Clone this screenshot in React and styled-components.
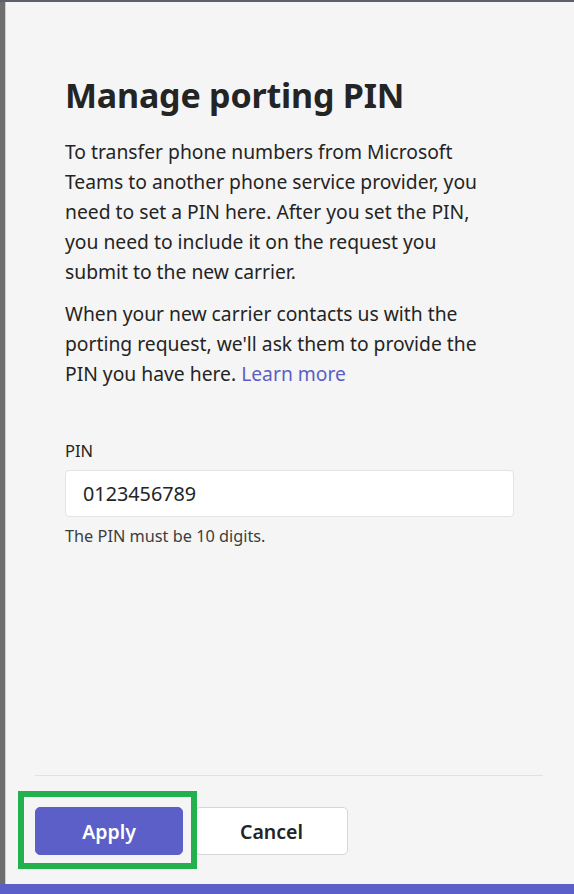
import React from "react";
import styled, { createGlobalStyle } from "styled-components";

const GlobalStyle = createGlobalStyle`
    html, body {
        margin: 0;
        padding: 0;
        background: #6b6b6b;
    }
    body {
        font-family: "Noto Sans", "Open Sans", sans-serif;
        color: #242424;
    }
`;

const Screen = styled.div`
    width: 574px;
    height: 894px;
    display: flex;
    flex-direction: column;
    overflow: hidden;
    position: relative;
    background: #6b6b6b;
`;

const TopEdge = styled.div`
    height: 2px;
    background: #5c6167;
    flex: none;
`;

const Middle = styled.div`
    flex: 1;
    display: flex;
    min-height: 0;
`;

const Backdrop = styled.div`
    width: 5px;
    flex: none;
    background: #6e6e6e;
    border-right: 1px solid #cfcfcf;
`;

const Dialog = styled.div`
    flex: 1;
    background: #f5f5f5;
    display: flex;
    flex-direction: column;
    padding: 71px 30px 0 29px;
`;

const Body = styled.div`
    flex: 1;
    padding-left: 30px;
`;

const Title = styled.h1`
    margin: 0 0 20px;
    font-size: 34px;
    line-height: 44px;
    font-weight: 700;
    letter-spacing: -0.2px;
`;

const Paragraph = styled.p`
    margin: 0 0 12px;
    width: 432px;
    font-size: 19.3px;
    line-height: 30px;
    font-weight: 400;
`;

const Link = styled.a`
    color: #5b5fc7;
    text-decoration: none;
`;

const Field = styled.div`
    margin-top: 51px;
    display: flex;
    flex-direction: column;
    width: 449px;
`;

const Label = styled.label`
    font-size: 16.5px;
    line-height: 22px;
    margin-bottom: 8px;
`;

const Input = styled.input`
    box-sizing: border-box;
    height: 47px;
    border: 1px solid #e3e3e3;
    border-radius: 4px;
    background: #fff;
    padding: 0 17px;
    font-family: inherit;
    font-size: 19.8px;
    color: #242424;
    outline: none;
`;

const Hint = styled.div`
    margin-top: 8px;
    font-size: 16.3px;
    line-height: 22px;
    color: #3d3d3d;
`;

const Divider = styled.hr`
    border: none;
    border-top: 1px solid #e1e1e1;
    margin: 0;
    width: 508px;
`;

const Footer = styled.div`
    display: flex;
    gap: 12px;
    padding: 31px 0 29px;
`;

const Button = styled.button`
    box-sizing: border-box;
    height: 48px;
    width: ${(p) => (p.$primary ? "148px" : "153px")};
    border-radius: 5px;
    border: 1px solid ${(p) => (p.$primary ? "#5b5fc7" : "#d6d6d6")};
    background: ${(p) => (p.$primary ? "#5b5fc7" : "#ffffff")};
    color: ${(p) => (p.$primary ? "#ffffff" : "#242424")};
    font-family: inherit;
    font-size: 19.5px;
    font-weight: 600;
`;

const Highlight = styled.div`
    position: absolute;
    left: 18px;
    top: 791px;
    width: 179px;
    height: 78px;
    box-sizing: border-box;
    border: 6px solid #22b14c;
    pointer-events: none;
`;

const BottomBar = styled.div`
    height: 10px;
    flex: none;
    background: #5b5fc7;
`;

export default function App() {
    return (
        <Screen>
            <GlobalStyle />
            <TopEdge />
            <Middle>
                <Backdrop />
                <Dialog>
                    <Body>
                        <Title>Manage porting PIN</Title>
                        <Paragraph>
                            To transfer phone numbers from Microsoft Teams to another phone service provider, you
                            need to set a PIN here. After you set the PIN, you need to include it on the request you
                            submit to the new carrier.
                        </Paragraph>
                        <Paragraph>
                            When your new carrier contacts us with the porting request, we'll ask them to provide the
                            PIN you have here. <Link href="#">Learn more</Link>
                        </Paragraph>
                        <Field>
                            <Label htmlFor="pin">PIN</Label>
                            <Input id="pin" defaultValue="0123456789" />
                            <Hint>The PIN must be 10 digits.</Hint>
                        </Field>
                    </Body>
                    <Divider />
                    <Footer>
                        <Button $primary>Apply</Button>
                        <Button>Cancel</Button>
                    </Footer>
                </Dialog>
            </Middle>
            <BottomBar />
            <Highlight />
        </Screen>
    );
}
